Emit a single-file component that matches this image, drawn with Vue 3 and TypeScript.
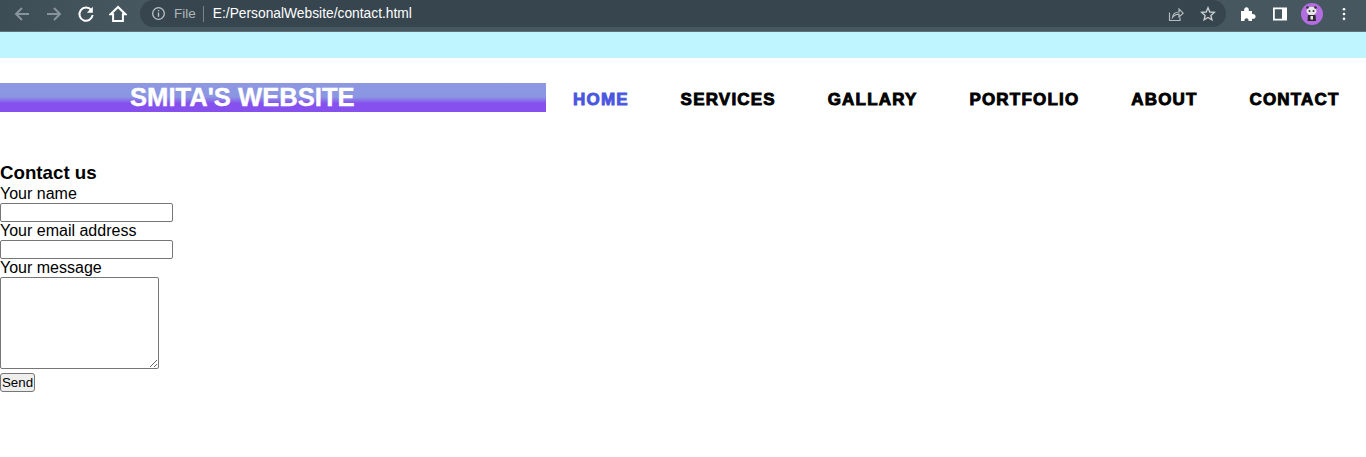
<script setup lang="ts">
const links: string[] = ['HOME', 'SERVICES', 'GALLARY', 'PORTFOLIO', 'ABOUT', 'CONTACT']
</script>

<template>
  <div class="page">
    <div class="chrome">
      <div class="navbtns">
        <svg class="ic" viewBox="0 0 18 18"><path d="M16 9H3M9 3 3 9l6 6" fill="none" stroke="#87949b" stroke-width="2"/></svg>
        <svg class="ic" viewBox="0 0 18 18"><path d="M2 9h13M9 3l6 6-6 6" fill="none" stroke="#87949b" stroke-width="2"/></svg>
        <svg class="ic" viewBox="0 0 18 18"><path d="M14.3 5.2A6.6 6.6 0 1 0 15.6 10" fill="none" stroke="#fff" stroke-width="2"/><path d="M15.8 1.8v6h-6z" fill="#fff"/></svg>
        <svg class="ic" viewBox="0 0 18 18"><path d="M9 2 1.6 9.2h2.5V16h9.8V9.200h2.500z" fill="none" stroke="#fff" stroke-width="2" stroke-linejoin="miter"/></svg>
      </div>
      <div class="omni">
        <svg class="info" viewBox="0 0 16 16"><circle cx="8" cy="8" r="6.200" fill="none" stroke="#bcc3c7" stroke-width="1.400"/><path d="M8 7v4.500M8 4.200v1.500" stroke="#bcc3c7" stroke-width="1.500"/></svg>
        <span class="file">File</span>
        <span class="sep"></span>
        <span class="url">E:/PersonalWebsite/contact.html</span>
        <span class="spacer"></span>
        <svg class="ic share" viewBox="0 0 16 16"><path d="M1.500 6.500v8h10.500v-3" fill="none" stroke="#b4bbbf" stroke-width="1.200"/><path d="M4.500 11.500c.4-3.600 3-5.500 6.500-5.500V3l4.200 4.200L11 11V8.200c-2.600 0-4.800.9-6.500 3.300z" fill="none" stroke="#b4bbbf" stroke-width="1.200"/></svg>
        <svg class="ic star" viewBox="0 0 16 16"><path d="m8 1.800 1.800 4.200 4.500.4-3.400 3 1 4.400L8 11.500l-3.900 2.300 1-4.400-3.400-3 4.500-.4z" fill="none" stroke="#c9ced1" stroke-width="1.400"/></svg>
      </div>
      <div class="tools">
        <svg class="tool" viewBox="0 0 16 16"><path d="M1 5h3.200C3.800 2.800 5 1.300 6.500 1.300S9.200 2.800 8.800 5H12v3.200c2.200-.4 3.600.8 3.600 2.300S14.200 13.200 12 12.800V15H8.500c.3-1.800-.7-2.800-2-2.800s-2.300 1-2 2.800H1z" fill="#fff"/></svg>
        <svg class="tool" viewBox="0 0 16 16"><path d="M1 1.500h14v13H1zM2.800 3.300v9.400h7.200V3.300z" fill="#fff" fill-rule="evenodd"/></svg>
        <svg class="avatar" viewBox="0 0 22 22">
          <circle cx="11" cy="11" r="11" fill="#b26de0"/>
          <ellipse cx="10.500" cy="8" rx="5" ry="4.200" fill="#e8e8e8"/>
          <circle cx="6.500" cy="4.500" r="1.300" fill="#333"/>
          <circle cx="14.500" cy="4.500" r="1.300" fill="#333"/>
          <circle cx="8.500" cy="8" r="1" fill="#333"/>
          <circle cx="12.500" cy="8" r="1" fill="#333"/>
          <path d="M7 12h7.500l.5 6H6.500z" fill="#2c2c30"/>
          <path d="M9.500 13h2.500v3.500H9.500z" fill="#e8e8e8"/>
        </svg>
        <svg class="dots" viewBox="0 0 4 16"><circle cx="2" cy="2.500" r="1.500" fill="#fff"/><circle cx="2" cy="8" r="1.500" fill="#fff"/><circle cx="2" cy="13.500" r="1.500" fill="#fff"/></svg>
      </div>
    </div>
    <div class="cyan"></div>
    <header class="head">
      <div class="banner"><h1>SMITA'S WEBSITE</h1></div>
      <nav class="menu">
        <a v-for="(l, i) in links" :key="l" :class="{ active: i === 0 }" href="#">{{ l }}</a>
      </nav>
    </header>
    <form class="form" @submit.prevent>
      <h2>Contact us</h2>
      <label for="n">Your name</label>
      <input id="n" type="text" />
      <label for="e">Your email address</label>
      <input id="e" type="text" />
      <label for="m">Your message</label>
      <textarea id="m"></textarea>
      <button type="submit">Send</button>
    </form>
  </div>
</template>

<style scoped>
.page {
  width: 1366px;
  height: 457px;
  overflow: hidden;
  background: #fff;
  font-family: "Liberation Sans", Arial, sans-serif;
  color: #000;
}
.chrome {
  height: 27px;
  padding-bottom: 4px;
  border-bottom: 1px solid #5f7079;
  background: linear-gradient(90deg, #3d4d56 0, #47575f 140px, #47575f 100%);
  display: flex;
  align-items: center;
  box-sizing: content-box;
}
.navbtns {
  width: 140px;
  flex: none;
  display: flex;
  align-items: center;
  gap: 14px;
  padding-left: 13px;
  box-sizing: border-box;
}
.ic {
  width: 18px;
  height: 18px;
  flex: none;
}
.omni {
  width: 1086px;
  height: 27px;
  flex: none;
  border-radius: 14px;
  background: #37454e;
  display: flex;
  align-items: center;
  padding-left: 11px;
  padding-right: 8px;
  box-sizing: border-box;
}
.info {
  width: 15px;
  height: 15px;
  flex: none;
}
.file {
  color: #aeb6ba;
  margin-left: 8px;
  font-size: 13.500px;
  font-family: "Liberation Sans", sans-serif;
}
.sep {
  width: 1px;
  height: 16px;
  background: #7a868c;
  margin: 0 9px 0 7px;
}
.url {
  color: #fff;
  font-size: 13.800px;
  font-family: "Liberation Sans", sans-serif;
}
.spacer {
  flex: 1;
}
.share {
  width: 16px;
  height: 16px;
}
.star {
  width: 16px;
  height: 16px;
  margin-left: 16px;
  margin-right: 2px;
}
.tools {
  flex: 1;
  display: flex;
  align-items: center;
  padding-left: 14px;
}
.tool {
  width: 16px;
  height: 16px;
  flex: none;
  margin-right: 16px;
}
.avatar {
  width: 22px;
  height: 22px;
  flex: none;
  margin-left: -3px;
}
.dots {
  width: 4px;
  height: 14px;
  flex: none;
  margin-left: 19px;
}
.cyan {
  height: 26px;
  background: #bff5ff;
}
.head {
  margin-top: 25px;
  display: flex;
  align-items: center;
  height: 29px;
}
.banner {
  width: 546px;
  height: 29px;
  flex: none;
  background: linear-gradient(180deg, #8d97e2 0, #8b96e2 48%, #8650ee 70%, #8650ee 100%);
}
h1 {
  margin: 0;
  padding-left: 130px;
  font-size: 25.600px;
  line-height: 28px;
  font-weight: 700;
  color: #fff;
  white-space: nowrap;
  -webkit-text-stroke: 0.4px #fff;
}
.menu {
  flex: 1;
  display: flex;
  gap: 51.800px;
  padding: 5px 0 0 27px;
  height: 29px;
  align-items: center;
  box-sizing: border-box;
}
.menu a {
  text-decoration: none;
  color: #000;
  font-family: "Liberation Sans", sans-serif;
  font-weight: 700;
  font-size: 17px;
  letter-spacing: 1.200px;
  -webkit-text-stroke: 0.9px currentColor;
  white-space: nowrap;
}
.menu a.active {
  color: #4a55e0;
}
.form {
  margin-top: 50px;
  display: flex;
  flex-direction: column;
  align-items: flex-start;
  font-size: 16px;
  line-height: 18px;
}
h2 {
  margin: 0 0 1px;
  font-size: 18.720px;
  line-height: 22px;
  font-weight: 700;
}
label {
  display: block;
  height: 18px;
}
input {
  box-sizing: border-box;
  width: 173px;
  height: 19px;
  margin: 0;
  padding: 1px 2px;
  border: 1px solid #767676;
  border-radius: 2px;
  background: #fff;
}
textarea {
  box-sizing: border-box;
  width: 159px;
  height: 92px;
  margin: 0;
  padding: 2px;
  border: 1px solid #767676;
  border-radius: 2px;
  background: #fff;
  display: block;
}
button {
  box-sizing: border-box;
  margin-top: 4px;
  width: 35px;
  height: 19px;
  padding: 0;
  border: 1px solid #767676;
  border-radius: 3px;
  background: #efefef;
  font-family: "Liberation Sans", sans-serif;
  font-size: 13.330px;
  line-height: 15px;
  color: #000;
}
</style>
